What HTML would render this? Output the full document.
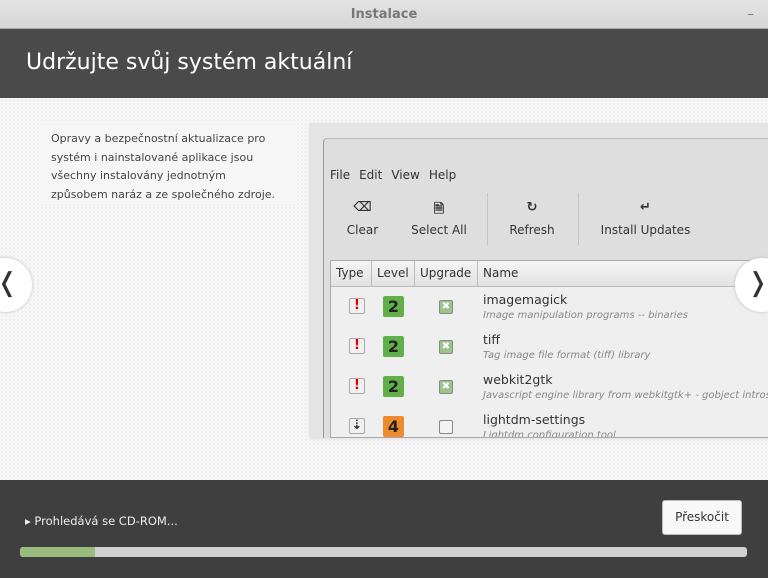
<!DOCTYPE html>
<html><head><meta charset="utf-8"><style>
*{margin:0;padding:0;box-sizing:border-box}
body{width:768px;height:578px;overflow:hidden;font-family:"DejaVu Sans","Liberation Sans",sans-serif;background:#f4f4f4;position:relative}
.tb{position:absolute;left:0;top:0;width:768px;height:29px;background:linear-gradient(#e4e4e4,#d6d6d6);border-bottom:1px solid #aaa;text-align:center;font-size:13px;font-weight:bold;color:#777;line-height:29px}
.tb .m{position:absolute;right:14px;top:0;font-weight:normal}
.hd{position:absolute;left:0;top:29px;width:768px;height:69px;background:#4a4a4a;color:#fff;font-size:22px;padding-left:26px;line-height:68px}
.ct{position:absolute;left:0;top:98px;width:768px;height:382px;background-color:#f6f6f6;background-image:radial-gradient(#dcdcdc 0.7px,transparent 0.8px);background-size:4px 4px}
.txt{position:absolute;left:40px;top:122px;width:255px;height:82px;background:#f6f6f6;font-size:11px;color:#444;line-height:18.5px;padding-left:11px;padding-top:8px;white-space:nowrap}
.shot{position:absolute;left:310px;top:124px;width:458px;height:314px;background:#e4e4e4;box-shadow:0 0 3px #ccc}
.win{position:absolute;left:323px;top:138px;width:445px;height:300px;background:#dedede;border-left:1px solid #999;border-top:1px solid #bbb;border-radius:4px 0 0 0}
.menu{position:absolute;left:330px;top:168px;font-size:12px;color:#333}
.menu span{margin-right:9px}
.tool{position:absolute;top:200px;text-align:center;font-size:12px;color:#333;white-space:nowrap}
.tool .i{font-size:13px;font-weight:bold;height:23px}
.sep{position:absolute;top:193px;width:1px;height:52px;background:#c4c4c4}
.tbl{position:absolute;left:330px;top:260px;width:438px;height:178px;background:#efefef;border:1px solid #aaa;border-right:none;overflow:hidden}
.th{height:26px;background:linear-gradient(#f4f4f4,#e2e2e2);border-bottom:1px solid #bbb;font-size:12px;color:#333;position:relative}
.th div{position:absolute;top:0;height:26px;line-height:25px;border-right:1px solid #bbb;padding-left:5px}
.row{position:absolute;left:0;height:40px;width:438px}
.ty{position:absolute;left:18px;top:10px;width:16px;height:16px;border:1px solid #aaa;border-radius:2px;background:#f0f0f0;color:#d00;font-weight:bold;font-size:13px;text-align:center;line-height:14px}
.lv{position:absolute;left:52px;top:8px;width:21px;height:21px;border-radius:2px;color:#222;font-weight:bold;font-size:16px;text-align:center;line-height:21px}
.g{background:#5fb04a}.o{background:#ef8a2e}
.cb{position:absolute;left:108px;top:12px;width:14px;height:14px;border:1px solid #888;border-radius:2px;background:#9cc58b;color:#fff;font-size:10px;text-align:center;line-height:12px}
.cb.e{background:#f4f4f4}
.nm{position:absolute;left:152px;top:4px;font-size:12.5px;color:#333}
.ds{position:absolute;left:152px;top:22px;font-size:10px;font-style:italic;color:#888;white-space:nowrap}
.nav{position:absolute;top:258px;width:54px;height:54px;border-radius:50%;background:#fff;box-shadow:0 0 3px #bbb;font-size:26px;color:#333;line-height:50px}
.ft{position:absolute;left:0;top:480px;width:768px;height:98px;background:#3f3f3f}
.st{position:absolute;left:25px;top:514px;font-size:11.5px;color:#eee}
.btn{position:absolute;left:662px;top:500px;width:80px;height:35px;background:#f8f8f8;border:1px solid #bbb;border-radius:3px;font-size:12px;color:#333;text-align:center;line-height:33px}
.pb{position:absolute;left:20px;top:547px;width:727px;height:10px;background:#d0d0d0;border-radius:3px;overflow:hidden}
.pb div{width:75px;height:10px;background:#99bb7b}
</style></head><body>
<div class="tb">Instalace<span class="m">–</span></div>
<div class="hd">Udržujte svůj systém aktuální</div>
<div class="ct"></div>
<div class="txt">Opravy a bezpečnostní aktualizace pro<br>systém i nainstalované aplikace jsou<br>všechny instalovány jednotným<br>způsobem naráz a ze společného zdroje.</div>
<div class="shot"></div>
<div class="win"></div>
<div class="menu"><span>File</span><span>Edit</span><span>View</span><span>Help</span></div>
<div class="tool" style="left:340px;width:45px"><div class="i">⌫</div>Clear</div>
<div class="tool" style="left:405px;width:68px"><div class="i">🗎</div>Select All</div>
<div class="sep" style="left:487px"></div>
<div class="tool" style="left:503px;width:58px"><div class="i">↻</div>Refresh</div>
<div class="sep" style="left:578px"></div>
<div class="tool" style="left:598px;width:95px"><div class="i">↵</div>Install Updates</div>
<div class="tbl">
<div class="th"><div style="left:0;width:41px">Type</div><div style="left:41px;width:43px">Level</div><div style="left:84px;width:63px">Upgrade</div><div style="left:147px;width:300px;border:none">Name</div></div>
<div class="row" style="top:27px"><div class="ty">!</div><div class="lv g">2</div><div class="cb">✖</div><div class="nm">imagemagick</div><div class="ds">Image manipulation programs -- binaries</div></div>
<div class="row" style="top:67px"><div class="ty">!</div><div class="lv g">2</div><div class="cb">✖</div><div class="nm">tiff</div><div class="ds">Tag image file format (tiff) library</div></div>
<div class="row" style="top:107px"><div class="ty">!</div><div class="lv g">2</div><div class="cb">✖</div><div class="nm">webkit2gtk</div><div class="ds">Javascript engine library from webkitgtk+ - gobject introspection</div></div>
<div class="row" style="top:147px"><div class="ty" style="color:#333">⇣</div><div class="lv o">4</div><div class="cb e"></div><div class="nm">lightdm-settings</div><div class="ds">Lightdm configuration tool</div></div>
</div>
<div class="nav" style="left:-22px;text-align:right;padding-right:14px">❬</div>
<div class="nav" style="left:735px;padding-left:12px">❭</div>
<div class="ft"></div>
<div class="st">▸ Prohledává se CD-ROM...</div>
<div class="btn">Přeskočit</div>
<div class="pb"><div></div></div>
</body></html>
